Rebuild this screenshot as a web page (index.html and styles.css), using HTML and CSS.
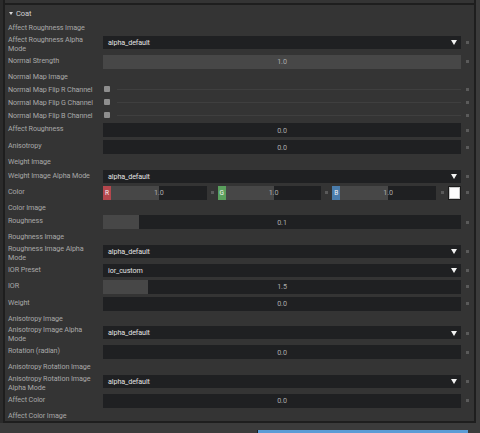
FILE: index.html
```html
<!DOCTYPE html>
<html lang="en">
<head>
    <meta charset="UTF-8">
    <title>Coat</title>
    <link rel="stylesheet" href="styles.css">
</head>
<body>
    <div class="top">
        <div class="main">
            <div class="prev"></div>

            <div class="frame">
                <div class="frame-header"><span class="caret"></span>Coat</div>

                <div class="rows">
                    <div class="row label-only"><span class="label">Affect Roughness Image</span></div>

                    <div class="row tall">
                        <span class="label">Affect Roughness Alpha<br>Mode</span>
                        <div class="combo">alpha_default<span class="arrow"></span></div>
                        <div class="dot-cell"><span class="dot"></span></div>
                    </div>

                    <div class="row">
                        <span class="label">Normal Strength</span>
                        <div class="field"><span class="fill" style="width:100%"></span><span class="value">1.0</span></div>
                        <div class="dot-cell"><span class="dot"></span></div>
                    </div>

                    <div class="row label-only"><span class="label">Normal Map Image</span></div>

                    <div class="row check">
                        <span class="label">Normal Map Flip R Channel</span>
                        <span class="checkbox"></span><span class="track"></span>
                        <div class="dot-cell"><span class="dot"></span></div>
                    </div>
                    <div class="row check">
                        <span class="label">Normal Map Flip G Channel</span>
                        <span class="checkbox"></span><span class="track"></span>
                        <div class="dot-cell"><span class="dot"></span></div>
                    </div>
                    <div class="row check">
                        <span class="label">Normal Map Flip B Channel</span>
                        <span class="checkbox"></span><span class="track"></span>
                        <div class="dot-cell"><span class="dot"></span></div>
                    </div>

                    <div class="row">
                        <span class="label">Affect Roughness</span>
                        <div class="field"><span class="value">0.0</span></div>
                        <div class="dot-cell"><span class="dot"></span></div>
                    </div>

                    <div class="row">
                        <span class="label">Anisotropy</span>
                        <div class="field"><span class="value">0.0</span></div>
                        <div class="dot-cell"><span class="dot"></span></div>
                    </div>

                    <div class="row label-only"><span class="label">Weight Image</span></div>

                    <div class="row combo-row">
                        <span class="label">Weight Image Alpha Mode</span>
                        <div class="combo">alpha_default<span class="arrow"></span></div>
                        <div class="dot-cell"><span class="dot"></span></div>
                    </div>

                    <div class="row">
                        <span class="label">Color</span>
                        <div class="color-edit">
                            <div class="channel">
                                <span class="tag tag-r">R</span>
                                <div class="field"><span class="fill" style="width:50%"></span><span class="value">1.0</span></div>
                            </div>
                            <div class="sep"><span class="dot"></span></div>
                            <div class="channel">
                                <span class="tag tag-g">G</span>
                                <div class="field"><span class="fill" style="width:50%"></span><span class="value">1.0</span></div>
                            </div>
                            <div class="sep"><span class="dot"></span></div>
                            <div class="channel">
                                <span class="tag tag-b">B</span>
                                <div class="field"><span class="fill" style="width:50%"></span><span class="value">1.0</span></div>
                            </div>
                            <div class="sep sep-last"><span class="dot"></span></div>
                            <span class="swatch"></span>
                        </div>
                        <div class="dot-cell"><span class="dot"></span></div>
                    </div>

                    <div class="row label-only"><span class="label">Color Image</span></div>

                    <div class="row">
                        <span class="label">Roughness</span>
                        <div class="field"><span class="fill" style="width:10%"></span><span class="value">0.1</span></div>
                        <div class="dot-cell"><span class="dot"></span></div>
                    </div>

                    <div class="row label-only"><span class="label">Roughness Image</span></div>

                    <div class="row tall">
                        <span class="label">Roughness Image Alpha<br>Mode</span>
                        <div class="combo">alpha_default<span class="arrow"></span></div>
                        <div class="dot-cell"><span class="dot"></span></div>
                    </div>

                    <div class="row combo-row">
                        <span class="label">IOR Preset</span>
                        <div class="combo">ior_custom<span class="arrow"></span></div>
                        <div class="dot-cell"><span class="dot"></span></div>
                    </div>

                    <div class="row">
                        <span class="label">IOR</span>
                        <div class="field"><span class="fill" style="width:12.5%"></span><span class="value">1.5</span></div>
                        <div class="dot-cell"><span class="dot"></span></div>
                    </div>

                    <div class="row">
                        <span class="label">Weight</span>
                        <div class="field"><span class="value">0.0</span></div>
                        <div class="dot-cell"><span class="dot"></span></div>
                    </div>

                    <div class="row label-only"><span class="label">Anisotropy Image</span></div>

                    <div class="row tall">
                        <span class="label">Anisotropy Image Alpha<br>Mode</span>
                        <div class="combo">alpha_default<span class="arrow"></span></div>
                        <div class="dot-cell"><span class="dot"></span></div>
                    </div>

                    <div class="row">
                        <span class="label">Rotation (radian)</span>
                        <div class="field"><span class="value">0.0</span></div>
                        <div class="dot-cell"><span class="dot"></span></div>
                    </div>

                    <div class="row label-only"><span class="label">Anisotropy Rotation Image</span></div>

                    <div class="row tall">
                        <span class="label">Anisotropy Rotation Image<br>Alpha Mode</span>
                        <div class="combo">alpha_default<span class="arrow"></span></div>
                        <div class="dot-cell"><span class="dot"></span></div>
                    </div>

                    <div class="row">
                        <span class="label">Affect Color</span>
                        <div class="field"><span class="value">0.0</span></div>
                        <div class="dot-cell"><span class="dot"></span></div>
                    </div>

                    <div class="row label-only"><span class="label">Affect Color Image</span></div>
                </div>
            </div>
        </div>
        <div class="scrollbar"></div>
    </div>

    <div class="footer"><div class="progress"></div></div>
</body>
</html>
```

FILE: styles.css
```css
body {
    margin: 0;
    width: 480px;
    height: 433px;
    overflow: hidden;
    background: #2b2b2b;
    font-family: Roboto, "Liberation Sans", sans-serif;
    font-size: 7.2px;
    letter-spacing: -0.1px;
    color: #a8a8a8;
}
.top {
    display: flex;
    height: 423px;
}
.main {
    flex: 1;
    margin-left: 3px;
    display: flex;
    flex-direction: column;
    border-left: 2px solid #1e1e1e;
    border-right: 2px solid #1e1e1e;
}
.prev {
    height: 3px;
    background: #343434;
    border-bottom: 2px solid #1e1e1e;
}
.frame {
    flex: 1;
    background: #343434;
    border-bottom: 2px solid #1e1e1e;
}
.frame-header {
    height: 16px;
    display: flex;
    align-items: center;
    padding-left: 4px;
    color: #d2d2d2;
    font-size: 7.5px;
}
.caret {
    width: 0;
    height: 0;
    border-left: 2.5px solid transparent;
    border-right: 2.5px solid transparent;
    border-top: 3.5px solid #d8d8d8;
    margin-right: 3px;
}
.rows {
    display: flex;
    flex-direction: column;
    gap: 3px;
    padding: 2px 0 0 3px;
}
.row {
    display: flex;
    align-items: flex-start;
    height: 14px;
}
.row.label-only {
    height: 9.5px;
    align-items: center;
}
.row.check {
    height: 10px;
    align-items: center;
}
.row.combo-row {
    height: 13px;
}
.row.tall {
    height: 16px;
}
.label {
    width: 95px;
    flex: none;
    line-height: 9px;
    margin-top: 1px;
    white-space: nowrap;
}
.tall .label {
    margin-top: -1px;
}
.label-only .label, .check .label {
    margin-top: 0;
}
.field {
    flex: 1;
    height: 14px;
    position: relative;
    background: #1f2022;
    display: flex;
    align-items: center;
    justify-content: center;
}
.fill {
    position: absolute;
    left: 0;
    top: 0;
    bottom: 0;
    background: #474747;
}
.value {
    position: relative;
    color: #ababab;
}
.combo {
    flex: 1;
    height: 13px;
    position: relative;
    background: #1f2022;
    color: #e2e2e2;
    display: flex;
    align-items: center;
    padding-left: 5px;
}
.arrow {
    position: absolute;
    right: 4px;
    top: 4.5px;
    width: 0;
    height: 0;
    border-left: 3.5px solid transparent;
    border-right: 3.5px solid transparent;
    border-top: 5px solid #f2f2f2;
}
.dot-cell {
    width: 8px;
    flex: none;
    height: 100%;
    max-height: 14px;
    padding-left: 5px;
    display: flex;
    align-items: center;
}
.dot {
    width: 3px;
    height: 3px;
    background: #5a5a5a;
}
.checkbox {
    width: 6px;
    height: 6px;
    margin-left: 1px;
    border-radius: 1px;
    background: #8e8e8e;
}
.track {
    flex: 1;
    height: 1px;
    margin-left: 7px;
    background: #3f3f3f;
}
.color-edit {
    flex: 1;
    display: flex;
    height: 14px;
}
.channel {
    flex: 1;
    display: flex;
}
.tag {
    width: 8px;
    flex: none;
    display: flex;
    align-items: center;
    justify-content: center;
    color: #f4f4f4;
    font-size: 6.5px;
}
.tag-r {
    background: #b4474d;
}
.tag-g {
    background: #5a9f5d;
}
.tag-b {
    background: #4a7cab;
}
.sep {
    width: 11px;
    flex: none;
    display: flex;
    align-items: center;
    justify-content: center;
}
.sep-last {
    width: 12px;
}
.swatch {
    width: 11px;
    height: 12px;
    flex: none;
    background: #fbfbfb;
    border: 1px solid #1a1a1a;
    box-shadow: inset 0 0 0 1px #c8c8c8;
}
.scrollbar {
    width: 4px;
    background: #3b3b3b;
}
.footer {
    height: 10px;
    box-sizing: border-box;
    padding: 7px 0 0 258px;
    background: #3b3b3b;
}
.progress {
    width: 210px;
    height: 3px;
    background: #5b9bd5;
    box-shadow: -1px 0 0 #1e1e1e;
}
```
